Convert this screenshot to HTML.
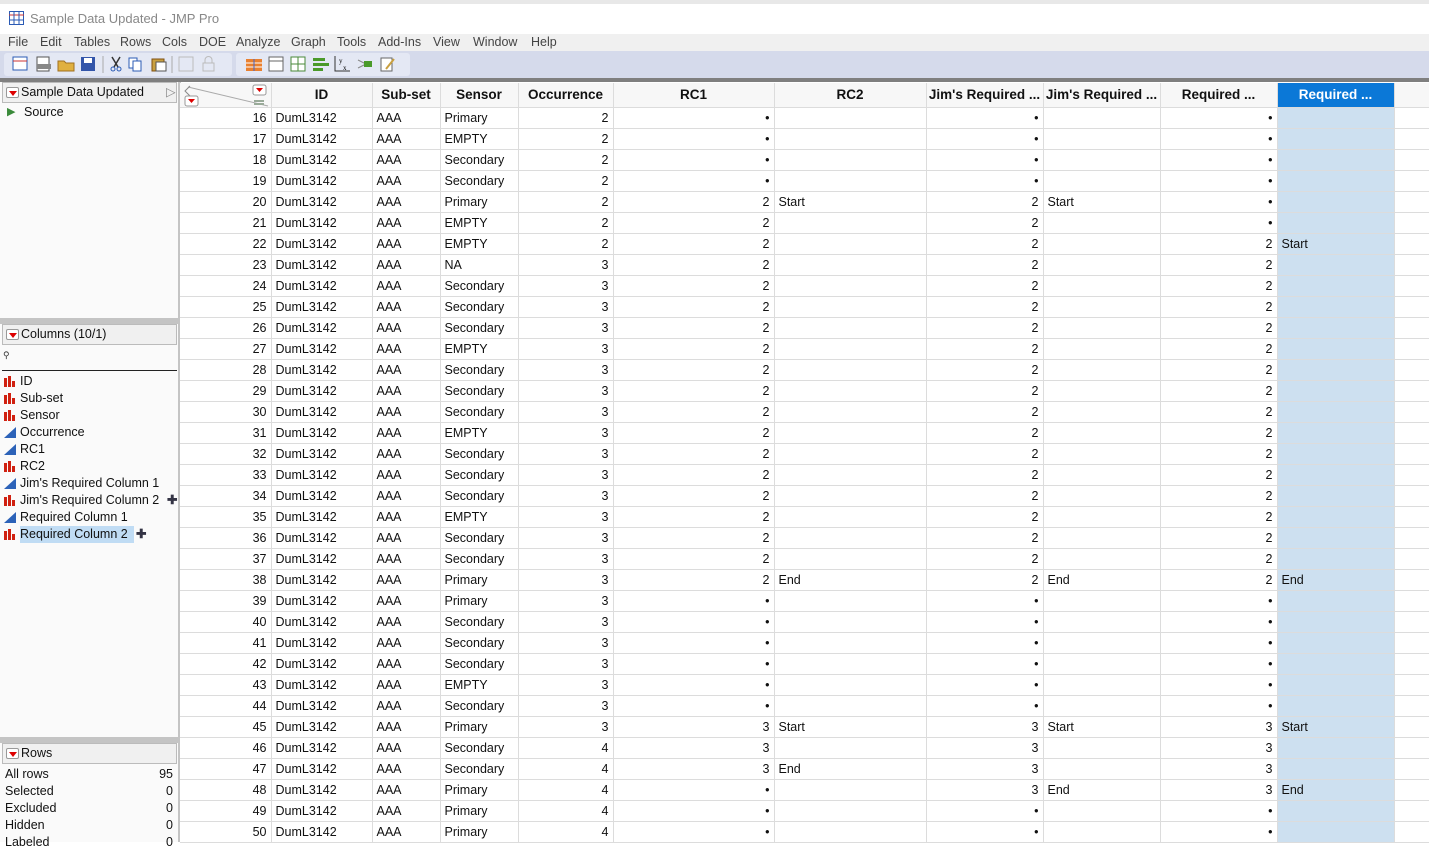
<!DOCTYPE html>
<html><head><meta charset="utf-8">
<style>
*{margin:0;padding:0;box-sizing:border-box}
body{width:1429px;height:842px;overflow:hidden;background:#fff;font-family:"Liberation Sans",sans-serif;font-size:12.5px;color:#111;position:relative}
.abs{position:absolute}
#bm{left:0;top:0;width:1429px;height:4px;background:#e8e8e8}
#title{left:0;top:4px;width:1429px;height:30px;background:#fff;color:#888;font-size:13px}
#menu{left:0;top:34px;width:1429px;height:17px;background:#f0f0f0;font-size:12.5px;color:#444}
#menu span{position:absolute;top:1px}
#tb{left:0;top:51px;width:1429px;height:27px;background:#d5daeb}
#gbar{left:0;top:78px;width:1429px;height:4px;background:#7f7f7f}
#left{left:0;top:82px;width:178px;height:760px;background:#fafafa}
#divider{left:178px;top:82px;width:3px;height:760px;background:#c4c4c4}
.phdr{position:absolute;left:2px;width:175px;height:21px;background:#f0f0f0;border:1px solid #bbb}
.tri{position:absolute;left:3px;top:4px;width:13px;height:11px;border:1px solid #999;border-radius:2px;background:#fff}
.tri:after{content:"";position:absolute;left:2px;top:3px;border-left:4px solid transparent;border-right:4px solid transparent;border-top:5px solid #d00}
.bar{display:inline-block;position:absolute;left:4px;width:12px;height:11px}
table{border-collapse:collapse;table-layout:fixed;position:absolute;left:180px;top:83px;width:1249px}
td,th{height:21px;border-right:1px solid #dcdcdc;border-bottom:1px solid #dcdcdc;padding:0 4px;white-space:nowrap;overflow:hidden;font-size:12.5px}
th{font-weight:bold;background:#f7f7f7;height:24px;text-align:center;font-size:13.5px;padding:0 2px}
td.r{text-align:right}
td.n{text-align:right;background:#fff}
.sel{background:#cde0f0}
th.sel{background:#0b78d7;color:#fff}
</style></head><body>
<div class="abs" id="bm"></div>
<div class="abs" id="title">
 <svg class="abs" style="left:9px;top:7px" width="16" height="15"><rect x="0.5" y="0.5" width="14" height="13" fill="#fff" stroke="#2b5bb5"/><line x1="0" y1="4" x2="15" y2="4" stroke="#c33"/><line x1="5" y1="0" x2="5" y2="14" stroke="#2b5bb5"/><line x1="10" y1="0" x2="10" y2="14" stroke="#2b5bb5"/><line x1="0" y1="9" x2="15" y2="9" stroke="#2b5bb5"/></svg>
 <span class="abs" style="left:30px;top:7px">Sample Data Updated - JMP Pro</span>
</div>
<div class="abs" id="menu">
 <span style="left:8px">File</span><span style="left:40px">Edit</span><span style="left:74px">Tables</span><span style="left:120px">Rows</span><span style="left:162px">Cols</span><span style="left:199px">DOE</span><span style="left:236px">Analyze</span><span style="left:291px">Graph</span><span style="left:337px">Tools</span><span style="left:378px">Add-Ins</span><span style="left:433px">View</span><span style="left:473px">Window</span><span style="left:531px">Help</span>
</div>
<div class="abs" id="tb">
 <div class="abs" style="left:4px;top:2px;width:228px;height:23px;background:#e4e8f4;border-radius:3px"></div>
 <div class="abs" style="left:236px;top:2px;width:174px;height:23px;background:#e4e8f4;border-radius:3px"></div>
 <svg class="abs" style="left:0;top:0" width="420" height="27">
  <rect x="13" y="6" width="14" height="13" fill="#fff" stroke="#2b5bb5"/><line x1="13" y1="10" x2="27" y2="10" stroke="#c33"/>
  <rect x="37" y="6" width="12" height="14" fill="#fff" stroke="#555"/><rect x="37" y="13" width="14" height="5" fill="#888"/>
  <path d="M58 10h6l2 2h8v8h-16z" fill="#e0b040" stroke="#a07020"/>
  <rect x="81" y="6" width="14" height="14" fill="#3355aa"/><rect x="84" y="7" width="8" height="5" fill="#fff"/>
  <line x1="103" y1="5" x2="103" y2="22" stroke="#aaa"/>
  <path d="M112 6l6 10M120 6l-6 10" stroke="#333" stroke-width="1.5"/><circle cx="113" cy="18" r="2" fill="none" stroke="#2b5bb5"/><circle cx="119" cy="18" r="2" fill="none" stroke="#2b5bb5"/>
  <rect x="129" y="7" width="8" height="10" fill="#fff" stroke="#2b5bb5"/><rect x="133" y="10" width="8" height="10" fill="#fff" stroke="#2b5bb5"/>
  <rect x="152" y="8" width="12" height="12" fill="#c9a040" stroke="#805010"/><rect x="156" y="11" width="10" height="9" fill="#fff" stroke="#555"/>
  <line x1="172" y1="5" x2="172" y2="22" stroke="#aaa"/>
  <rect x="179" y="6" width="14" height="14" fill="none" stroke="#bbb"/><rect x="203" y="12" width="11" height="8" fill="none" stroke="#bbb"/><path d="M205 12v-3a3.5 3.5 0 0 1 7 0v3" fill="none" stroke="#bbb"/>
  <rect x="246" y="8" width="16" height="12" fill="#e98030"/><line x1="246" y1="12" x2="262" y2="12" stroke="#fff"/><line x1="246" y1="16" x2="262" y2="16" stroke="#fff"/><line x1="254" y1="8" x2="254" y2="20" stroke="#4466cc"/>
  <rect x="269" y="6" width="14" height="14" fill="#fff" stroke="#666"/><line x1="269" y1="10" x2="283" y2="10" stroke="#666"/>
  <rect x="291" y="6" width="14" height="14" fill="#fff" stroke="#4a8a3a"/><line x1="298" y1="6" x2="298" y2="20" stroke="#4a8a3a"/><line x1="291" y1="13" x2="305" y2="13" stroke="#4a8a3a"/>
  <rect x="313" y="7" width="12" height="3" fill="#4a9a2a"/><rect x="313" y="12" width="16" height="3" fill="#4a9a2a"/><rect x="313" y="17" width="10" height="3" fill="#4a9a2a"/>
  <path d="M335 5v15h15" fill="none" stroke="#333"/><text x="339" y="12" font-size="7" font-family="Liberation Serif">y</text><text x="343" y="19" font-size="7" font-family="Liberation Serif">x</text>
  <path d="M358 9l8 4l-8 4" fill="none" stroke="#888"/><rect x="364" y="10" width="8" height="6" fill="#4a9a2a"/>
  <rect x="381" y="7" width="11" height="13" fill="#fff" stroke="#666"/><path d="M386 18l8-10" stroke="#c9a040" stroke-width="2"/>
 </svg>
</div>
<div class="abs" id="gbar"></div>

<div class="abs" id="left">
 <div class="phdr" style="top:0"><div class="tri"></div><span class="abs" style="left:18px;top:2px">Sample Data Updated</span><span class="abs" style="left:163px;top:1px;color:#888">▷</span></div>
 <span class="abs" style="left:7px;top:23px;color:#3a8a3a;font-size:11px">▶</span><span class="abs" style="left:24px;top:23px">Source</span>
 <div class="abs" style="left:0;top:236px;width:178px;height:6px;background:#c4c4c4"></div>
 <div class="phdr" style="top:242px"><div class="tri"></div><span class="abs" style="left:18px;top:2px">Columns (10/1)</span></div>
 <span class="abs" style="left:3px;top:268px;font-size:9px;color:#333">⚲</span>
 <div class="abs" style="left:2px;top:288px;width:175px;height:1px;background:#222"></div>
 <div class="abs" style="left:0;top:291px;width:178px">
  <div style="position:relative;height:17px"><svg class="bar" style="top:3px" viewBox="0 0 12 11"><path d="M0 11V2h3v9zM4 11V0h3v11zM8 11V5h3v6z" fill="#d02010"/></svg><span class="abs" style="left:20px;top:1px">ID</span></div>
  <div style="position:relative;height:17px"><svg class="bar" style="top:3px" viewBox="0 0 12 11"><path d="M0 11V2h3v9zM4 11V0h3v11zM8 11V5h3v6z" fill="#d02010"/></svg><span class="abs" style="left:20px;top:1px">Sub-set</span></div>
  <div style="position:relative;height:17px"><svg class="bar" style="top:3px" viewBox="0 0 12 11"><path d="M0 11V2h3v9zM4 11V0h3v11zM8 11V5h3v6z" fill="#d02010"/></svg><span class="abs" style="left:20px;top:1px">Sensor</span></div>
  <div style="position:relative;height:17px"><svg class="bar" style="top:3px" viewBox="0 0 12 11"><path d="M0 11L12 0V11z" fill="#2c62b8"/></svg><span class="abs" style="left:20px;top:1px">Occurrence</span></div>
  <div style="position:relative;height:17px"><svg class="bar" style="top:3px" viewBox="0 0 12 11"><path d="M0 11L12 0V11z" fill="#2c62b8"/></svg><span class="abs" style="left:20px;top:1px">RC1</span></div>
  <div style="position:relative;height:17px"><svg class="bar" style="top:3px" viewBox="0 0 12 11"><path d="M0 11V2h3v9zM4 11V0h3v11zM8 11V5h3v6z" fill="#d02010"/></svg><span class="abs" style="left:20px;top:1px">RC2</span></div>
  <div style="position:relative;height:17px"><svg class="bar" style="top:3px" viewBox="0 0 12 11"><path d="M0 11L12 0V11z" fill="#2c62b8"/></svg><span class="abs" style="left:20px;top:1px">Jim's Required Column 1</span></div>
  <div style="position:relative;height:17px"><svg class="bar" style="top:3px" viewBox="0 0 12 11"><path d="M0 11V2h3v9zM4 11V0h3v11zM8 11V5h3v6z" fill="#d02010"/></svg><span class="abs" style="left:20px;top:1px">Jim's Required Column 2</span><span class="abs" style="left:167px;top:0;color:#334;font-weight:bold">✚</span></div>
  <div style="position:relative;height:17px"><svg class="bar" style="top:3px" viewBox="0 0 12 11"><path d="M0 11L12 0V11z" fill="#2c62b8"/></svg><span class="abs" style="left:20px;top:1px">Required Column 1</span></div>
  <div style="position:relative;height:17px"><svg class="bar" style="top:3px" viewBox="0 0 12 11"><path d="M0 11V2h3v9zM4 11V0h3v11zM8 11V5h3v6z" fill="#d02010"/></svg><span class="abs" style="left:20px;top:0;height:17px;width:114px;background:#c0dcf4"></span><span class="abs" style="left:20px;top:1px">Required Column 2</span><span class="abs" style="left:136px;top:0;color:#334;font-weight:bold">✚</span></div>
 </div>
 <div class="abs" style="left:0;top:655px;width:178px;height:6px;background:#c4c4c4"></div>
 <div class="phdr" style="top:661px"><div class="tri"></div><span class="abs" style="left:18px;top:2px">Rows</span></div>
 <div class="abs" style="left:5px;top:684px;width:168px;line-height:17px">
  <div>All rows<span style="float:right">95</span></div>
  <div>Selected<span style="float:right">0</span></div>
  <div>Excluded<span style="float:right">0</span></div>
  <div>Hidden<span style="float:right">0</span></div>
  <div>Labeled<span style="float:right">0</span></div>
 </div>
</div>
<div class="abs" id="divider"></div>

<table>
<colgroup><col style="width:91px"><col style="width:101px"><col style="width:68px"><col style="width:78px"><col style="width:95px"><col style="width:161px"><col style="width:152px"><col style="width:117px"><col style="width:117px"><col style="width:117px"><col style="width:117px"><col style="width:35px"></colgroup>
<tr><th style="background:#f7f7f7;position:relative"><svg class="abs" style="left:0;top:0" width="91" height="24"><line x1="8" y1="4" x2="88" y2="23" stroke="#aaa"/><path d="M10 3l-5 5l5 5" fill="none" stroke="#888"/><rect x="73" y="2" width="13" height="10" rx="2" fill="#fff" stroke="#999"/><path d="M76 5h7l-3.5 4z" fill="#d00"/><rect x="5" y="13" width="13" height="10" rx="2" fill="#fff" stroke="#999"/><path d="M8 16h7l-3.5 4z" fill="#d00"/><rect x="74" y="17" width="10" height="2" fill="#9a9"/><rect x="74" y="20" width="10" height="2" fill="#9a9"/></svg></th><th>ID</th><th>Sub-set</th><th>Sensor</th><th>Occurrence</th><th>RC1</th><th>RC2</th><th>Jim's Required ...</th><th>Jim's Required ...</th><th>Required ...</th><th class="sel">Required ...</th><th></th></tr>
<tr><td class="n">16</td><td>DumL3142</td><td>AAA</td><td>Primary</td><td class="r">2</td><td class="r">•</td><td></td><td class="r">•</td><td></td><td class="r">•</td><td class="sel"></td><td></td></tr>
<tr><td class="n">17</td><td>DumL3142</td><td>AAA</td><td>EMPTY</td><td class="r">2</td><td class="r">•</td><td></td><td class="r">•</td><td></td><td class="r">•</td><td class="sel"></td><td></td></tr>
<tr><td class="n">18</td><td>DumL3142</td><td>AAA</td><td>Secondary</td><td class="r">2</td><td class="r">•</td><td></td><td class="r">•</td><td></td><td class="r">•</td><td class="sel"></td><td></td></tr>
<tr><td class="n">19</td><td>DumL3142</td><td>AAA</td><td>Secondary</td><td class="r">2</td><td class="r">•</td><td></td><td class="r">•</td><td></td><td class="r">•</td><td class="sel"></td><td></td></tr>
<tr><td class="n">20</td><td>DumL3142</td><td>AAA</td><td>Primary</td><td class="r">2</td><td class="r">2</td><td>Start</td><td class="r">2</td><td>Start</td><td class="r">•</td><td class="sel"></td><td></td></tr>
<tr><td class="n">21</td><td>DumL3142</td><td>AAA</td><td>EMPTY</td><td class="r">2</td><td class="r">2</td><td></td><td class="r">2</td><td></td><td class="r">•</td><td class="sel"></td><td></td></tr>
<tr><td class="n">22</td><td>DumL3142</td><td>AAA</td><td>EMPTY</td><td class="r">2</td><td class="r">2</td><td></td><td class="r">2</td><td></td><td class="r">2</td><td class="sel">Start</td><td></td></tr>
<tr><td class="n">23</td><td>DumL3142</td><td>AAA</td><td>NA</td><td class="r">3</td><td class="r">2</td><td></td><td class="r">2</td><td></td><td class="r">2</td><td class="sel"></td><td></td></tr>
<tr><td class="n">24</td><td>DumL3142</td><td>AAA</td><td>Secondary</td><td class="r">3</td><td class="r">2</td><td></td><td class="r">2</td><td></td><td class="r">2</td><td class="sel"></td><td></td></tr>
<tr><td class="n">25</td><td>DumL3142</td><td>AAA</td><td>Secondary</td><td class="r">3</td><td class="r">2</td><td></td><td class="r">2</td><td></td><td class="r">2</td><td class="sel"></td><td></td></tr>
<tr><td class="n">26</td><td>DumL3142</td><td>AAA</td><td>Secondary</td><td class="r">3</td><td class="r">2</td><td></td><td class="r">2</td><td></td><td class="r">2</td><td class="sel"></td><td></td></tr>
<tr><td class="n">27</td><td>DumL3142</td><td>AAA</td><td>EMPTY</td><td class="r">3</td><td class="r">2</td><td></td><td class="r">2</td><td></td><td class="r">2</td><td class="sel"></td><td></td></tr>
<tr><td class="n">28</td><td>DumL3142</td><td>AAA</td><td>Secondary</td><td class="r">3</td><td class="r">2</td><td></td><td class="r">2</td><td></td><td class="r">2</td><td class="sel"></td><td></td></tr>
<tr><td class="n">29</td><td>DumL3142</td><td>AAA</td><td>Secondary</td><td class="r">3</td><td class="r">2</td><td></td><td class="r">2</td><td></td><td class="r">2</td><td class="sel"></td><td></td></tr>
<tr><td class="n">30</td><td>DumL3142</td><td>AAA</td><td>Secondary</td><td class="r">3</td><td class="r">2</td><td></td><td class="r">2</td><td></td><td class="r">2</td><td class="sel"></td><td></td></tr>
<tr><td class="n">31</td><td>DumL3142</td><td>AAA</td><td>EMPTY</td><td class="r">3</td><td class="r">2</td><td></td><td class="r">2</td><td></td><td class="r">2</td><td class="sel"></td><td></td></tr>
<tr><td class="n">32</td><td>DumL3142</td><td>AAA</td><td>Secondary</td><td class="r">3</td><td class="r">2</td><td></td><td class="r">2</td><td></td><td class="r">2</td><td class="sel"></td><td></td></tr>
<tr><td class="n">33</td><td>DumL3142</td><td>AAA</td><td>Secondary</td><td class="r">3</td><td class="r">2</td><td></td><td class="r">2</td><td></td><td class="r">2</td><td class="sel"></td><td></td></tr>
<tr><td class="n">34</td><td>DumL3142</td><td>AAA</td><td>Secondary</td><td class="r">3</td><td class="r">2</td><td></td><td class="r">2</td><td></td><td class="r">2</td><td class="sel"></td><td></td></tr>
<tr><td class="n">35</td><td>DumL3142</td><td>AAA</td><td>EMPTY</td><td class="r">3</td><td class="r">2</td><td></td><td class="r">2</td><td></td><td class="r">2</td><td class="sel"></td><td></td></tr>
<tr><td class="n">36</td><td>DumL3142</td><td>AAA</td><td>Secondary</td><td class="r">3</td><td class="r">2</td><td></td><td class="r">2</td><td></td><td class="r">2</td><td class="sel"></td><td></td></tr>
<tr><td class="n">37</td><td>DumL3142</td><td>AAA</td><td>Secondary</td><td class="r">3</td><td class="r">2</td><td></td><td class="r">2</td><td></td><td class="r">2</td><td class="sel"></td><td></td></tr>
<tr><td class="n">38</td><td>DumL3142</td><td>AAA</td><td>Primary</td><td class="r">3</td><td class="r">2</td><td>End</td><td class="r">2</td><td>End</td><td class="r">2</td><td class="sel">End</td><td></td></tr>
<tr><td class="n">39</td><td>DumL3142</td><td>AAA</td><td>Primary</td><td class="r">3</td><td class="r">•</td><td></td><td class="r">•</td><td></td><td class="r">•</td><td class="sel"></td><td></td></tr>
<tr><td class="n">40</td><td>DumL3142</td><td>AAA</td><td>Secondary</td><td class="r">3</td><td class="r">•</td><td></td><td class="r">•</td><td></td><td class="r">•</td><td class="sel"></td><td></td></tr>
<tr><td class="n">41</td><td>DumL3142</td><td>AAA</td><td>Secondary</td><td class="r">3</td><td class="r">•</td><td></td><td class="r">•</td><td></td><td class="r">•</td><td class="sel"></td><td></td></tr>
<tr><td class="n">42</td><td>DumL3142</td><td>AAA</td><td>Secondary</td><td class="r">3</td><td class="r">•</td><td></td><td class="r">•</td><td></td><td class="r">•</td><td class="sel"></td><td></td></tr>
<tr><td class="n">43</td><td>DumL3142</td><td>AAA</td><td>EMPTY</td><td class="r">3</td><td class="r">•</td><td></td><td class="r">•</td><td></td><td class="r">•</td><td class="sel"></td><td></td></tr>
<tr><td class="n">44</td><td>DumL3142</td><td>AAA</td><td>Secondary</td><td class="r">3</td><td class="r">•</td><td></td><td class="r">•</td><td></td><td class="r">•</td><td class="sel"></td><td></td></tr>
<tr><td class="n">45</td><td>DumL3142</td><td>AAA</td><td>Primary</td><td class="r">3</td><td class="r">3</td><td>Start</td><td class="r">3</td><td>Start</td><td class="r">3</td><td class="sel">Start</td><td></td></tr>
<tr><td class="n">46</td><td>DumL3142</td><td>AAA</td><td>Secondary</td><td class="r">4</td><td class="r">3</td><td></td><td class="r">3</td><td></td><td class="r">3</td><td class="sel"></td><td></td></tr>
<tr><td class="n">47</td><td>DumL3142</td><td>AAA</td><td>Secondary</td><td class="r">4</td><td class="r">3</td><td>End</td><td class="r">3</td><td></td><td class="r">3</td><td class="sel"></td><td></td></tr>
<tr><td class="n">48</td><td>DumL3142</td><td>AAA</td><td>Primary</td><td class="r">4</td><td class="r">•</td><td></td><td class="r">3</td><td>End</td><td class="r">3</td><td class="sel">End</td><td></td></tr>
<tr><td class="n">49</td><td>DumL3142</td><td>AAA</td><td>Primary</td><td class="r">4</td><td class="r">•</td><td></td><td class="r">•</td><td></td><td class="r">•</td><td class="sel"></td><td></td></tr>
<tr><td class="n">50</td><td>DumL3142</td><td>AAA</td><td>Primary</td><td class="r">4</td><td class="r">•</td><td></td><td class="r">•</td><td></td><td class="r">•</td><td class="sel"></td><td></td></tr>
</table>
</body></html>
